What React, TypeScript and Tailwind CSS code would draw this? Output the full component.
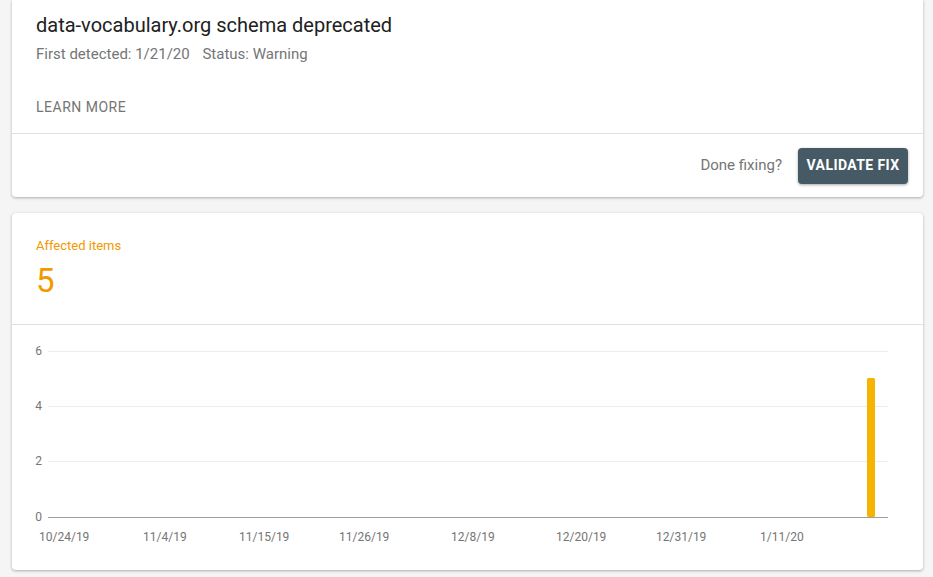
const yTicks = [
  { label: "6", y: 26 },
  { label: "4", y: 81 },
  { label: "2", y: 136 },
  { label: "0", y: 192 },
];

const xTicks = [
  { label: "10/24/19", x: 27 },
  { label: "11/4/19", x: 131 },
  { label: "11/15/19", x: 227 },
  { label: "11/26/19", x: 327 },
  { label: "12/8/19", x: 439 },
  { label: "12/20/19", x: 544 },
  { label: "12/31/19", x: 644 },
  { label: "1/11/20", x: 748 },
];

function IssueCard() {
  return (
    <div className="bg-white rounded-b shadow-[0_1px_3px_rgba(0,0,0,0.3)]">
      <div className="px-6 pt-[12px]">
        <h1 className="text-[20px] leading-[26px] text-[#212121]">data-vocabulary.org schema deprecated</h1>
        <div className="mt-[6px] text-[15px] leading-[20px] text-[#757575]">
          First detected: 1/21/20 <span className="ml-[9px]">Status: Warning</span>
        </div>
        <div className="pt-[33px] pb-[16px] text-[14px] leading-[20px] tracking-[0.5px] text-[#757575]">LEARN MORE</div>
      </div>
      <div className="border-t border-[#e0e0e0] flex items-center justify-end gap-4 px-[15px] h-[64px]">
        <span className="text-[15px] text-[#757575]">Done fixing?</span>
        <button className="h-[36px] w-[110px] rounded bg-[#455a64] text-white text-[14px] font-bold tracking-[0.4px] shadow-[0_1px_3px_rgba(0,0,0,0.35)]">
          VALIDATE FIX
        </button>
      </div>
    </div>
  );
}

function ChartCard() {
  return (
    <div className="bg-white rounded shadow-[0_1px_3px_rgba(0,0,0,0.3)]">
      <div className="px-6 pt-[24px] h-[111px]">
        <div className="text-[13px] leading-[18px] text-[#f29900]">Affected items</div>
        <div className="mt-[7px] text-[33px] leading-[38px] text-[#f29900]">5</div>
      </div>
      <div className="border-t border-[#e0e0e0]">
        <svg width="911" height="245" className="block">
          {yTicks.map((t) => (
            <g key={t.label}>
              <line
                x1="36"
                x2="876"
                y1={t.y + 0.5}
                y2={t.y + 0.5}
                stroke={t.label === "0" ? "#9e9e9e" : "#ececec"}
                strokeWidth="1"
              />
              <text x="30" y={t.y + 4} textAnchor="end" fontSize="12" fill="#757575" fontFamily="Roboto, sans-serif">
                {t.label}
              </text>
            </g>
          ))}
          <rect x="855" y="53" width="8" height="139" rx="1.5" fill="#f4b400" />
          {xTicks.map((t) => (
            <text key={t.label} x={t.x} y="216" fontSize="12" fill="#757575" fontFamily="Roboto, sans-serif">
              {t.label}
            </text>
          ))}
        </svg>
      </div>
    </div>
  );
}

export default function App() {
  return (
    <div className="w-[933px] h-[577px] overflow-hidden bg-[#f5f5f5] font-['Roboto',sans-serif]">
      <div className="pl-[12px] pr-[10px] flex flex-col gap-[16px]">
        <IssueCard />
        <ChartCard />
      </div>
    </div>
  );
}
